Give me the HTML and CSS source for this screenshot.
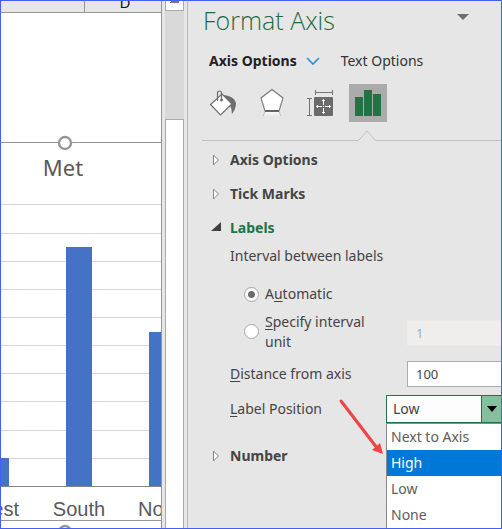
FILE: index.html
```html
<!DOCTYPE html>
<html lang="en">
<head>
<meta charset="utf-8">
<title>Format Axis</title>
<link rel="stylesheet" href="styles.css">
</head>
<body>
<main class="sheet">
  <div class="columns"><span class="column-c"></span><span class="column-d">D</span></div>
  <svg class="chart" viewBox="1 13 160 515" preserveAspectRatio="xMinYMin slice" role="img" aria-label="Column chart">
    <rect x="1" y="13" width="160" height="515" fill="#fff"/>
    <g stroke="#d6d6d6">
      <path d="M1 204.5H161M1 233.5H161M1 261.5H161M1 289.5H161M1 317.5H161M1 345.5H161M1 373.5H161M1 401.5H161M1 430.5H161M1 458.5H161"/>
    </g>
    <g fill="#4472c4">
      <rect x="1" y="458" width="8" height="28"/>
      <rect x="66" y="247" width="26" height="239"/>
      <rect x="149" y="332" width="12" height="154"/>
    </g>
    <path d="M1 486.5H161" stroke="#858585"/>
    <path d="M1 142.5H161M1 520.5H161" stroke="#969696"/>
    <circle cx="65" cy="143" r="6" fill="#fff" stroke="#969696" stroke-width="2.4"/>
    <circle cx="65" cy="532" r="6" fill="#fff" stroke="#969696" stroke-width="2.4"/>
    <g fill="#595959">
      <text class="chart-title" x="63" y="176" text-anchor="middle">Met</text>
      <text class="chart-label" x="19" y="516" text-anchor="end">West</text>
      <text class="chart-label" x="79" y="516" text-anchor="middle">South</text>
      <text class="chart-label" x="138" y="516">North</text>
    </g>
  </svg>
</main>
<div class="scrollbar">
  <button class="scroll-up" aria-label="Scroll up"><svg width="10" height="3" viewBox="0 0 10 3"><path d="M1 0H9V2H0V1H1z" fill="#777"/></svg></button>
  <div class="scroll-thumb"></div>
</div>
<aside class="pane">
  <header class="pane-header">
    <h1>Format Axis</h1>
    <button class="pane-menu" aria-label="Pane options"><svg width="12" height="6" viewBox="0 0 12 6"><path d="M0 0H12L6 6z" fill="#6d6d6d"/></svg></button>
  </header>
  <nav class="tabs">
    <button class="tab tab-active">Axis Options <svg width="14" height="9" viewBox="0 0 14 9"><path d="M1 1L7 7L13 1" fill="none" stroke="#2b8fd9" stroke-width="1.6"/></svg></button>
    <button class="tab">Text Options</button>
  </nav>
  <div class="tools">
    <button class="tool" aria-label="Fill and line">
      <svg width="38" height="38" viewBox="0 0 38 38">
        <path d="M19 11Q29 12 31 19Q31 25 27 30Q27 20 19 14z" fill="#6e6e6e"/>
        <path d="M17 10L27 20L15.500 31L5.500 20.500z" fill="#fff" stroke="#6e6e6e" stroke-width="1.2"/>
        <path d="M12.500 17V9Q12.500 7 14.500 7Q16.500 7 16.500 9V16" fill="none" stroke="#6e6e6e" stroke-width="1.2"/>
        <circle cx="16.500" cy="16" r="1.5" fill="#6e6e6e"/>
      </svg>
    </button>
    <button class="tool" aria-label="Effects">
      <svg width="38" height="38" viewBox="0 0 38 38">
        <defs><linearGradient id="fade" x1="0" y1="0" x2="0" y2="1"><stop stop-color="#fff"/><stop offset="1" stop-color="#e6e6e6"/></linearGradient></defs>
        <path d="M12 27H26L29 33H9z" fill="url(#fade)"/>
        <path d="M12 28L10 32M26 28L28 32" stroke="#bbb"/>
        <path d="M19 5.500L30 14L26 27H12L8 14z" fill="#fff" stroke="#777" stroke-width="1.1"/>
        <path d="M12 27H26" stroke="#666" stroke-width="2"/>
      </svg>
    </button>
    <button class="tool" aria-label="Size and properties">
      <svg width="38" height="38" viewBox="0 0 38 38">
        <path d="M14.500 6V11M31.500 6V11M14.500 8.500H31.500M6 14.500H11M6 31.500H11M8.500 14.500V31.500" stroke="#737373"/>
        <rect x="13" y="13" width="19" height="19" rx="1" fill="#6b6b6b"/>
        <path d="M22.500 15.500V21M22.500 24V29.500M15.500 22.500H21M24 22.500H29.500M22 22.500H23" stroke="#fff"/>
        <path d="M21 17L22.500 15.500L24 17M21 28L22.500 29.500L24 28M17 21L15.500 22.500L17 24M28 21L29.500 22.500L28 24" fill="none" stroke="#fff"/>
      </svg>
    </button>
    <button class="tool tool-active" aria-label="Axis options">
      <svg width="38" height="38" viewBox="0 0 38 38"><path d="M6 13H14V32H6zM15 6H23V32H15zM24 10H32V32H24z" fill="#217346"/></svg>
      <svg class="notch" width="18" height="11" viewBox="0 0 18 11"><path d="M0 10.500L1 10L9 1L17 10L18 10.500V11H0z" fill="#e6e6e6"/><path d="M0 10.500L1 10L9 1L17 10L18 10.500" fill="none" stroke="#c0c0c0"/></svg>
    </button>
  </div>
  <section><h2><button class="section"><svg width="10" height="12" viewBox="0 0 10 12"><path d="M2.500 1L7.500 6L2.500 11z" fill="#fff" stroke="#888"/></svg>Axis Options</button></h2></section>
  <section><h2><button class="section"><svg width="10" height="12" viewBox="0 0 10 12"><path d="M2.500 1L7.500 6L2.500 11z" fill="#fff" stroke="#888"/></svg>Tick Marks</button></h2></section>
  <section>
    <h2><button class="section section-open"><svg width="10" height="12" viewBox="0 0 10 12"><path d="M10 0V9H0z" fill="#404040"/></svg>Labels</button></h2>
    <form class="fields">
      <fieldset>
        <legend>Interval between labels</legend>
        <div class="choice">
          <input type="radio" name="interval" id="automatic" checked>
          <label for="automatic">A<u>u</u>tomatic</label>
        </div>
        <div class="choice choice-unit">
          <input type="radio" name="interval" id="specify">
          <label for="specify"><u>S</u>pecify interval unit</label>
          <input class="box" type="text" value="1" aria-label="Interval unit" disabled>
        </div>
      </fieldset>
      <div class="field">
        <label for="distance"><u>D</u>istance from axis</label>
        <input class="box" type="text" id="distance" value="100">
      </div>
      <div class="field">
        <label for="position"><u>L</u>abel Position</label>
        <div class="combo">
          <select id="position"><option>Next to Axis</option><option>High</option><option selected>Low</option><option>None</option></select>
          <span class="combo-arrow"><svg width="10" height="6" viewBox="0 0 10 6"><path d="M0 0H10L5 6z"/></svg></span>
          <ul class="menu">
            <li>Next to Axis</li>
            <li class="menu-current">High</li>
            <li>Low</li>
            <li>None</li>
          </ul>
          <svg class="pointer" width="52" height="66" viewBox="0 0 52 66">
            <path d="M8 8L43 54" stroke="#999" stroke-width="3" opacity=".35"/>
            <path d="M6 6L42 53" stroke="#f14545" stroke-width="3" stroke-linecap="round"/>
            <path d="M48 59L37 55L45 48z" fill="#f14545"/>
          </svg>
        </div>
      </div>
    </form>
  </section>
  <section class="last"><h2><button class="section"><svg width="10" height="12" viewBox="0 0 10 12"><path d="M2.500 1L7.500 6L2.500 11z" fill="#fff" stroke="#888"/></svg>Number</button></h2></section>
</aside>
</body>
</html>
```
FILE: styles.css
```css
* { box-sizing: border-box; }

body {
  display: flex;
  height: 100vh;
  margin: 0;
  overflow: hidden;
  border: 1px solid #4460f4;
  background: #e6e6e6;
  color: #444;
  font: 14px/20px "Noto Sans", "Open Sans", sans-serif;
}

button, input, select { font: inherit; color: inherit; }
button { padding: 0; border: 0; background: none; }
svg { display: block; flex: none; }
h1, h2, ul, fieldset, legend { margin: 0; padding: 0; border: 0; }
u { text-underline-offset: 2px; }

/* Worksheet and chart */
.sheet {
  display: flex;
  flex: 0 0 161px;
  flex-direction: column;
  border-right: 1px solid #969696;
}
.columns {
  display: flex;
  flex: 0 0 12px;
  overflow: hidden;
  border-bottom: 1px solid #969696;
  color: #111;
  font: 15px/12px "Noto Sans", sans-serif;
}
.column-c { width: 84px; border-right: 1px solid #969696; }
.column-d { flex: 1; margin-top: -5px; padding-left: 4px; text-align: center; }
.chart { flex: 1; width: 100%; min-height: 0; }
.chart-title { font: 22px "Noto Sans", sans-serif; }
.chart-label { font: 20px "Liberation Sans", sans-serif; }

/* Vertical scrollbar */
.scrollbar {
  display: flex;
  flex: 0 0 26px;
  flex-direction: column;
  gap: 108px;
  padding: 0 3px;
  border-right: 1px solid #b9b9b9;
  background: linear-gradient(#d9d9d9, #d9d9d9) center / 19px 100% no-repeat;
}
.scroll-up {
  display: flex;
  justify-content: center;
  height: 10px;
  border: 1px solid #ababab;
  border-top: 0;
  background: #fff;
}
.scroll-thumb {
  flex: 1;
  border: 1px solid #ababab;
  border-bottom: 0;
  background: #fff;
}

/* Task pane */
.pane { flex: 1; min-width: 0; }
.pane-header {
  display: flex;
  align-items: flex-start;
  justify-content: space-between;
  height: 38px;
  padding: 0 32px 0 15px;
}
.pane-menu { padding-top: 13px; }
h1 {
  color: #1e6b41;
  font: 300 25px/38px "Open Sans", "Noto Sans", sans-serif;
}
.tabs {
  display: flex;
  align-items: center;
  gap: 21px;
  height: 44px;
  padding-left: 21px;
}
.tab { display: flex; align-items: center; gap: 9px; color: #333; white-space: nowrap; }
.tab-active { color: #222; font-weight: 700; }
.tools {
  display: flex;
  gap: 10px;
  height: 58px;
  margin-left: 14px;
  padding: 1px 0 0 3px;
  border-bottom: 1px solid #c0c0c0;
}
.tool { position: relative; width: 38px; height: 38px; }
.tool-active { background: #ababab; }
.notch { position: absolute; top: 46px; left: 9px; }

h2 { font-size: 14px; line-height: 20px; }
.section {
  display: flex;
  align-items: center;
  gap: 9px;
  height: 34px;
  padding-left: 23px;
  font-weight: 700;
}
.tools + section { margin-top: 2px; }
.section-open { color: #217346; }
.fields { padding-left: 42px; }
legend { height: 22px; line-height: 22px; }
.choice { display: flex; align-items: center; height: 30px; margin: 12px 0 4px 14px; }
.choice label { width: 120px; margin-left: 6px; }
.choice-unit { height: 40px; margin: 0 0 8px 14px; }
.choice-unit label { padding-bottom: 2px; }
.choice-unit input[type="radio"] { margin-bottom: 4px; }
input[type="radio"] {
  flex: none;
  width: 15px;
  height: 15px;
  margin: 0;
  border: 1px solid #a6a6a6;
  border-radius: 50%;
  appearance: none;
  background: #fff;
}
input[type="radio"]:checked { background: radial-gradient(circle, #6b6b6b 3px, #fff 4px); }
.box {
  width: 94px;
  height: 26px;
  margin-left: auto;
  padding: 0 8px;
  border: 1px solid #ababab;
  border-right: 0;
  border-radius: 0;
  background: #fff;
  font-size: 13px;
}
.box:disabled { border-color: #ebebeb; background: #efeeec; color: #ababab; }
.field {
  display: flex;
  align-items: center;
  justify-content: space-between;
  min-height: 26px;
  margin-bottom: 8px;
}
.combo { position: relative; display: flex; width: 115px; height: 28px; }
.combo select {
  width: 100%;
  padding: 0 6px;
  border: 1px solid #217346;
  border-right: 0;
  border-radius: 0;
  appearance: none;
  background: #fdfdfd;
}
.combo-arrow {
  position: absolute;
  top: 0;
  right: 0;
  display: grid;
  place-items: center;
  width: 20px;
  height: 28px;
  border: 1px solid #217346;
  border-right: 0;
  background: #86bfa0;
  pointer-events: none;
}
.menu {
  position: absolute;
  top: 28px;
  left: 0;
  width: 100%;
  border: 1px solid #8a8a8a;
  border-right: 0;
  background: #fff;
  color: #5c5c5c;
  list-style: none;
}
.menu li { height: 26px; padding-left: 4px; line-height: 26px; }
.menu-current { background: #0078d7; color: #fff; }
.pointer { position: absolute; top: 0; left: -51px; }
.last { margin-top: 16px; }
```
